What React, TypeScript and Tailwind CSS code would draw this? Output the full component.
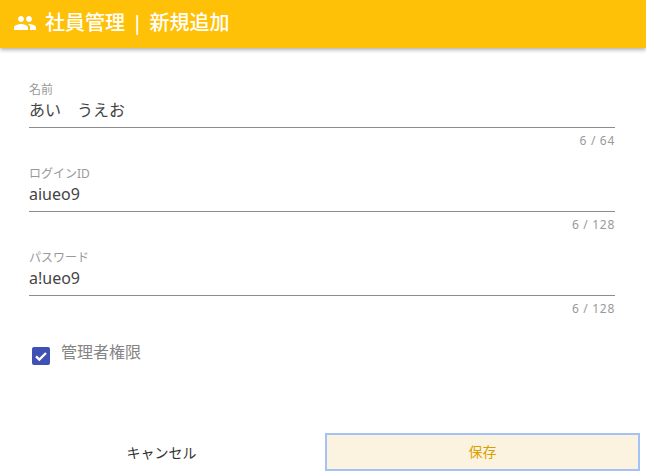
const fields = [
  { label: '名前', value: 'あい　うえお', count: '6 / 64' },
  { label: 'ログインID', value: 'aiueo9', count: '6 / 128' },
  { label: 'パスワード', value: 'a!ueo9', count: '6 / 128' },
];

function PeopleIcon() {
  return (
    <svg viewBox="0 0 24 24" className="mt-[-3px] h-[24px] w-[24px] fill-white">
      <path d="M16 11c1.66 0 2.99-1.34 2.99-3S17.66 5 16 5c-1.66 0-3 1.34-3 3s1.34 3 3 3zm-8 0c1.66 0 2.99-1.34 2.99-3S9.66 5 8 5C6.34 5 5 6.34 5 8s1.34 3 3 3zm0 2c-2.33 0-7 1.17-7 3.5V19h14v-2.5c0-2.33-4.67-3.5-7-3.5zm8 0c-.29 0-.62.02-.97.05 1.16.84 1.97 1.97 1.97 3.45V19h6v-2.5c0-2.33-4.67-3.5-7-3.5z" />
    </svg>
  );
}

export default function App() {
  return (
    <div className="flex h-[476px] w-[646px] flex-col overflow-hidden bg-white font-['Noto_Sans','Noto_Sans_CJK_JP',sans-serif]">
      <header className="flex h-[48px] shrink-0 items-center gap-[8px] bg-[#ffc107] pl-[13px] text-[20px] font-medium text-white shadow-[0_2px_4px_rgba(0,0,0,0.3)]">
        <PeopleIcon />
        <span className="mt-[-3px] [word-spacing:1.5px]">社員管理 | 新規追加</span>
      </header>

      <main className="flex flex-col pl-[29px] pr-[31px] pt-[35px]">
        {fields.map((f) => (
          <div key={f.label} className="h-[84px]">
            <div className="h-[14px] text-[12px] leading-[14px] text-[#999]">{f.label}</div>
            <div className="h-[31px] border-b border-[#8c8c8c] text-[16px] leading-[26px] text-[#444]">
              {f.value}
            </div>
            <div className="mt-[6px] text-right text-[12px] leading-[14px] tracking-[0.7px] text-[#999]">{f.count}</div>
          </div>
        ))}

        <div className="ml-[3px] mt-[4px] flex items-start gap-[11px]">
          <div className="mt-[8px] flex h-[18px] w-[18px] items-center justify-center rounded-[2px] bg-[#3f51b5]">
            <svg viewBox="0 0 24 24" className="h-[16px] w-[16px] fill-none stroke-white stroke-[3.4]">
              <path d="M4.5 12.5l5 5 10-10" />
            </svg>
          </div>
          <span className="mt-[1px] text-[16px] leading-[24px] text-[#858585]">管理者権限</span>
        </div>
      </main>

      <footer className="mt-auto mb-[5px] flex h-[38px] pr-[6px]">
        <button className="w-[323px] text-[14px] text-[#333]">キャンセル</button>
        <button className="ml-[2px] flex-1 border-2 border-[#a4c2f4] bg-[#fbf3e0] pb-[2px] text-[14px] text-[#dc9f00]">保存</button>
      </footer>
    </div>
  );
}
